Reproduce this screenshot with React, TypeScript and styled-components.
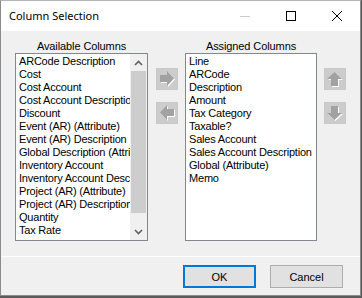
import styled, { createGlobalStyle } from "styled-components";

const GlobalStyle = createGlobalStyle`
  html, body {
    margin: 0;
    padding: 0;
    background: #5b5b5b;
  }
  body {
    font-family: "Liberation Sans", Arial, sans-serif;
    color: #000;
  }
`;

const available = [
  "ARCode Description",
  "Cost",
  "Cost Account",
  "Cost Account Description",
  "Discount",
  "Event (AR) (Attribute)",
  "Event (AR) Description",
  "Global Description (Attribute)",
  "Inventory Account",
  "Inventory Account Description",
  "Project (AR) (Attribute)",
  "Project (AR) Description",
  "Quantity",
  "Tax Rate",
];

const assigned = [
  "Line",
  "ARCode",
  "Description",
  "Amount",
  "Tax Category",
  "Taxable?",
  "Sales Account",
  "Sales Account Description",
  "Global (Attribute)",
  "Memo",
];

type Dir = "right" | "left" | "up" | "down";

const arrowPaths: Record<Dir, string> = {
  right: "M3 6H10V2L17 9.5L10 17V13H3Z",
  left: "M17 6H10V2L3 9.5L10 17V13H17Z",
  up: "M6 17V10H2L9.5 3L17 10H13V17Z",
  down: "M6 3V10H2L9.5 17L17 10H13V3Z",
};

const Window = styled.div`
  width: 361px;
  height: 296px;
  box-sizing: border-box;
  border: 1px solid #8a8a8a;
  border-top-color: #b5b5b5;
  background: #f0f0f0;
  display: flex;
  flex-direction: column;
  overflow: hidden;
`;

const TitleBar = styled.div`
  height: 30px;
  flex: none;
  background: #fff;
  display: flex;
  align-items: center;
  padding-left: 8px;
`;

const Title = styled.div`
  flex: 1;
  font-family: "Noto Sans", "Segoe UI", sans-serif;
  font-size: 11px;
  line-height: 16px;
  color: #000;
`;

const CaptionButton = styled.div`
  width: 46px;
  height: 30px;
  display: flex;
  align-items: center;
  justify-content: center;
`;

const Main = styled.div`
  padding: 9px 14px 0 14px;
  margin-bottom: 15px;
  display: flex;
  align-items: flex-start;
`;

const Column = styled.div<{ $width: number }>`
  width: ${(p) => p.$width}px;
  display: flex;
  flex-direction: column;
`;

const Label = styled.div`
  height: 13px;
  line-height: 13px;
  font-size: 11px;
  letter-spacing: -0.1px;
  text-align: center;
  white-space: nowrap;
`;

const ListBox = styled.div`
  height: 188px;
  box-sizing: border-box;
  border: 1px solid #828790;
  background: #fff;
  display: flex;
`;

const Items = styled.div`
  flex: 1;
  min-width: 0;
  overflow: hidden;
  padding: 1px 0 0 3px;
`;

const Item = styled.div`
  height: 13px;
  line-height: 13px;
  font-size: 11px;
  letter-spacing: -0.2px;
  white-space: nowrap;
  overflow: hidden;
`;

const ScrollBar = styled.div`
  width: 17px;
  flex: none;
  background: #f0f0f0;
  display: flex;
  flex-direction: column;
`;

const ScrollArrow = styled.div`
  height: 17px;
  flex: none;
  display: flex;
  align-items: center;
  justify-content: center;
`;

const Track = styled.div`
  flex: 1;
  display: flex;
  flex-direction: column;
`;

const Thumb = styled.div<{ $height: number }>`
  height: ${(p) => p.$height}px;
  margin: 0 1px;
  background: #cdcdcd;
`;

const MoverColumn = styled.div<{ $gap: number }>`
  margin-left: ${(p) => p.$gap}px;
  margin-top: 28px;
  display: flex;
  flex-direction: column;
  gap: 12px;
`;

const MoveButton = styled.div`
  width: 22px;
  height: 22px;
  box-sizing: border-box;
  border: 1px solid #c9c9c9;
  background: #cccccc;
  display: flex;
  align-items: center;
  justify-content: center;
`;

const Separator = styled.div`
  height: 1px;
  flex: none;
  background: #fff;
`;

const Footer = styled.div`
  padding: 8px 17px 7px 0;
  display: flex;
  justify-content: flex-end;
  gap: 14px;
`;

const DialogButton = styled.button<{ $default?: boolean }>`
  width: 73px;
  height: 23px;
  box-sizing: border-box;
  margin: 0;
  padding: 0;
  background: #e1e1e1;
  border: ${(p) => (p.$default ? "2px solid #0078d7" : "1px solid #adadad")};
  font-family: "Liberation Sans", Arial, sans-serif;
  font-size: 11px;
  color: #000;
`;

const Spacer = styled.div<{ $width: number }>`
  width: ${(p) => p.$width}px;
  flex: none;
`;

const ArrowIcon = ({ dir }: { dir: Dir }) => (
  <svg width="20" height="20" viewBox="0 0 20 20">
    <path d={arrowPaths[dir]} fill="#fff" transform="translate(1 1)" />
    <path d={arrowPaths[dir]} fill="#a2a2a2" />
  </svg>
);

const Chevron = ({ up }: { up?: boolean }) => (
  <svg width="9" height="6" viewBox="0 0 9 6">
    <path
      d={up ? "M1 5L4.5 1.5L8 5" : "M1 1L4.5 4.5L8 1"}
      fill="none"
      stroke="#606060"
      strokeWidth="1.6"
    />
  </svg>
);

export default function App() {
  return (
    <>
      <GlobalStyle />
      <Window>
        <TitleBar>
          <Title>Column Selection</Title>
          <CaptionButton>
            <svg width="10" height="10" viewBox="0 0 10 10">
              <path d="M0 5.5H10" stroke="#cccccc" strokeWidth="1" />
            </svg>
          </CaptionButton>
          <CaptionButton>
            <svg width="10" height="10" viewBox="0 0 10 10">
              <rect x="0.5" y="0.5" width="9" height="9" fill="none" stroke="#000" />
            </svg>
          </CaptionButton>
          <CaptionButton>
            <svg width="10" height="10" viewBox="0 0 10 10">
              <path d="M0 0L10 10M10 0L0 10" stroke="#000" strokeWidth="1" />
            </svg>
          </CaptionButton>
        </TitleBar>

        <Main>
          <Column $width={133}>
            <Label>Available Columns</Label>
            <ListBox>
              <Items>
                {available.map((name) => (
                  <Item key={name}>{name}</Item>
                ))}
              </Items>
              <ScrollBar>
                <ScrollArrow>
                  <Chevron up />
                </ScrollArrow>
                <Track>
                  <Thumb $height={142} />
                </Track>
                <ScrollArrow>
                  <Chevron />
                </ScrollArrow>
              </ScrollBar>
            </ListBox>
          </Column>

          <MoverColumn $gap={8}>
            <MoveButton>
              <ArrowIcon dir="right" />
            </MoveButton>
            <MoveButton>
              <ArrowIcon dir="left" />
            </MoveButton>
          </MoverColumn>

          <Spacer $width={7} />

          <Column $width={134}>
            <Label>Assigned Columns</Label>
            <ListBox>
              <Items>
                {assigned.map((name) => (
                  <Item key={name}>{name}</Item>
                ))}
              </Items>
            </ListBox>
          </Column>

          <MoverColumn $gap={7}>
            <MoveButton>
              <ArrowIcon dir="up" />
            </MoveButton>
            <MoveButton>
              <ArrowIcon dir="down" />
            </MoveButton>
          </MoverColumn>
        </Main>

        <Separator />

        <Footer>
          <DialogButton $default>OK</DialogButton>
          <DialogButton>Cancel</DialogButton>
        </Footer>
      </Window>
    </>
  );
}
